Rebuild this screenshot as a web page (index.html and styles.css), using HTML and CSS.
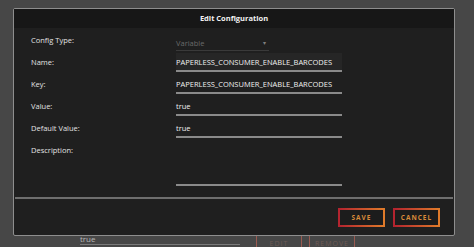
FILE: index.html
```html
<!DOCTYPE html>
<html lang="en">
<head>
    <meta charset="UTF-8">
    <meta name="viewport" content="width=device-width, initial-scale=1.0">
    <title>Edit Configuration</title>
    <link rel="stylesheet" href="styles.css">
</head>
<body>
    <!-- page behind the dialog -->
    <div class="page">
        <div class="page-row">
            <div class="page-input">true</div>
            <div class="page-btn">EDIT</div>
            <div class="page-btn">REMOVE</div>
        </div>
    </div>

    <div class="overlay">
        <div class="dialog">
            <div class="dialog-header">Edit Configuration</div>
            <div class="dialog-body">
                <div class="row">
                    <label>Config Type:</label>
                    <div class="select">
                        <span>Variable</span>
                        <span class="caret">&#9662;</span>
                    </div>
                </div>
                <div class="row">
                    <label>Name:</label>
                    <div class="field filled">PAPERLESS_CONSUMER_ENABLE_BARCODES</div>
                </div>
                <div class="row">
                    <label>Key:</label>
                    <div class="field">PAPERLESS_CONSUMER_ENABLE_BARCODES</div>
                </div>
                <div class="row">
                    <label>Value:</label>
                    <div class="field">true</div>
                </div>
                <div class="row">
                    <label>Default Value:</label>
                    <div class="field">true</div>
                </div>
                <div class="row">
                    <label>Description:</label>
                    <div class="field textarea"></div>
                </div>
            </div>
            <div class="dialog-footer">
                <button class="btn">SAVE</button>
                <button class="btn">CANCEL</button>
            </div>
        </div>
    </div>
</body>
</html>
```

FILE: styles.css
```css
body {
    font-family: "Open Sans", "Noto Sans", sans-serif;
    margin: 0;
    padding: 0;
    width: 474px;
    height: 247px;
    overflow: hidden;
    background-color: #474747;
    position: relative;
}
.page {
    padding-top: 234px;
}
.page-row {
    display: flex;
    align-items: flex-start;
}
.page-input {
    margin-left: 80px;
    width: 160px;
    height: 9px;
    padding-top: 1px;
    font-size: 8px;
    color: #b8b8b8;
    border-bottom: 1px solid #7a7a7a;
    line-height: 8px;
}
.page-btn {
    margin-left: 16px;
    width: 44px;
    height: 18px;
    border: 1px solid #9a5a50;
    font-size: 7px;
    color: #6e5a55;
    text-align: center;
    line-height: 18px;
    letter-spacing: 1px;
}
.page-btn + .page-btn {
    margin-left: 7px;
}
.overlay {
    position: absolute;
    top: 8px;
    left: 13px;
}
.dialog {
    width: 440px;
    height: 226px;
    border: 1px solid #8e8e8e;
    border-radius: 2px;
    background-color: #1f1f1f;
    display: flex;
    flex-direction: column;
}
.dialog-header {
    height: 19px;
    line-height: 19px;
    background-color: #171717;
    color: #f2f2f2;
    font-size: 7.5px;
    font-weight: 700;
    text-align: center;
}
.dialog-body {
    padding: 7px 0 0 16px;
    height: 162px;
    border-bottom: 2px solid #6e6e6e;
    margin: 0 1px;
}
.row {
    display: flex;
    align-items: flex-start;
    height: 22px;
}
.row label {
    width: 145px;
    font-size: 7.5px;
    color: #e2e2e2;
    line-height: 10px;
}
.select {
    width: 90px;
    height: 14px;
    margin-top: 1px;
    border-bottom: 1px solid #3a3a3a;
    display: flex;
    justify-content: space-between;
    font-size: 7.5px;
    color: #6a6a6a;
    line-height: 14px;
    padding-right: 3px;
}
.caret {
    font-size: 6px;
    color: #808080;
}
.field {
    width: 166px;
    height: 13px;
    margin-top: -4px;
    padding-top: 4px;
    border-bottom: 2px solid #8a8a8a;
    font-size: 7.5px;
    color: #f0f0f0;
    line-height: 10px;
    box-sizing: content-box;
}
.field.filled {
    background-color: #262626;
}
.textarea {
    height: 39px;
}
.dialog-footer {
    flex: 1;
    display: flex;
    justify-content: flex-end;
    align-items: center;
    gap: 8px;
    padding-right: 14px;
}
.btn {
    width: 47px;
    height: 19px;
    background-color: #1c1c1c;
    border: 2px solid;
    border-image: linear-gradient(90deg, #b3232f, #e07b2a) 1;
    color: #d98a3a;
    font-family: "Open Sans", sans-serif;
    font-size: 6.5px;
    font-weight: 700;
    letter-spacing: 1px;
    padding: 0;
}
```
